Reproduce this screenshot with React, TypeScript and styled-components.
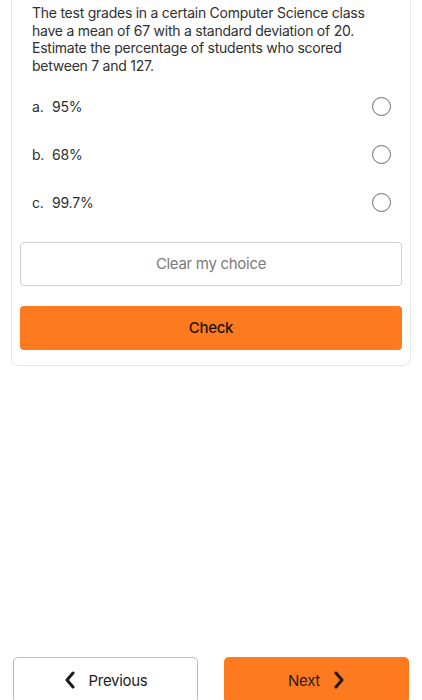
import React, {useState} from 'react';
import styled, {createGlobalStyle} from 'styled-components';

const GlobalStyle = createGlobalStyle`
  html, body {
    margin: 0;
    padding: 0;
    background: #ffffff;
  }
  body {
    font-family: Inter, "Noto Sans", "Liberation Sans", sans-serif;
    color: #2b2b2b;
    -webkit-font-smoothing: antialiased;
  }
`;

const options = [
  {letter: 'a.', label: '95%'},
  {letter: 'b.', label: '68%'},
  {letter: 'c.', label: '99.7%'},
];

const Chevron = ({dir}: {dir: 'left' | 'right'}) => (
  <svg width="12" height="18" viewBox="0 0 12 18" fill="none">
    <polyline
      points={dir === 'left' ? '9,2 3,9 9,16' : '3,2 9,9 3,16'}
      stroke="#1c1c1c"
      strokeWidth="3"
      strokeLinecap="round"
      strokeLinejoin="round"
    />
  </svg>
);

export default function App() {
  const [choice, setChoice] = useState<number | null>(null);

  return (
    <Styled.Page>
      <GlobalStyle />
      <Styled.Card>
        <Styled.Question>
          The test grades in a certain Computer Science class have a mean of 67
          with a standard deviation of 20. Estimate the percentage of students
          who scored between 7 and 127.
        </Styled.Question>
        <Styled.Options>
          {options.map((o, i) => (
            <Styled.Option key={o.letter} onClick={() => setChoice(i)}>
              <Styled.Letter>{o.letter}</Styled.Letter>
              <Styled.Label>{o.label}</Styled.Label>
              <Styled.Radio $checked={choice === i} />
            </Styled.Option>
          ))}
        </Styled.Options>
        <Styled.ClearButton onClick={() => setChoice(null)}>
          Clear my choice
        </Styled.ClearButton>
        <Styled.CheckButton>Check</Styled.CheckButton>
      </Styled.Card>
      <div />
      <Styled.Footer>
        <Styled.NavButton>
          <Chevron dir="left" />
          Previous
        </Styled.NavButton>
        <Styled.NavButton $primary>
          Next
          <Chevron dir="right" />
        </Styled.NavButton>
      </Styled.Footer>
    </Styled.Page>
  );
}

const Styled = {
  Page: styled.div`
    height: 700px;
    overflow: hidden;
    display: grid;
    grid-template-rows: auto 1fr auto;
  `,
  Card: styled.div`
    margin: 0 11px;
    padding: 4px 8px 15px;
    border: 1px solid #e8e8e8;
    border-top: none;
    border-radius: 0 0 7px 7px;
    display: flex;
    flex-direction: column;
  `,
  Question: styled.p`
    margin: 0;
    padding: 0 12px;
    font-size: 14px;
    letter-spacing: -0.25px;
    line-height: 17.7px;
    color: #303030;
  `,
  Options: styled.div`
    display: flex;
    flex-direction: column;
    margin-top: 8px;
  `,
  Option: styled.div`
    display: flex;
    align-items: center;
    height: 48px;
    padding: 0 12px;
    font-size: 14px;
    letter-spacing: -0.2px;
    color: #303030;
    cursor: pointer;
  `,
  Letter: styled.span`
    width: 20px;
  `,
  Label: styled.span`
    flex: 1;
  `,
  Radio: styled.span<{$checked: boolean}>`
    width: 19px;
    height: 19px;
    margin-right: -1px;
    border: 1.5px solid #6b6b6b;
    border-radius: 50%;
    box-sizing: border-box;
    background: ${p => (p.$checked ? 'radial-gradient(#333 40%, transparent 45%)' : 'transparent')};
  `,
  ClearButton: styled.button`
    margin-top: 15px;
    height: 44px;
    border: 1px solid #cfcfcf;
    border-radius: 4px;
    background: #ffffff;
    color: #7a7a7a;
    font-family: inherit;
    font-size: 15px;
    letter-spacing: -0.3px;
  `,
  CheckButton: styled.button`
    margin-top: 20px;
    height: 44px;
    border: none;
    border-radius: 4px;
    background: #fd7a1e;
    color: #1e1208;
    font-family: inherit;
    font-size: 15px;
    letter-spacing: -0.3px;
    font-weight: 500;
  `,
  Footer: styled.div`
    display: grid;
    grid-template-columns: 1fr 1fr;
    gap: 26px;
    padding: 0 13px 0;
    height: 43px;
  `,
  NavButton: styled.button<{$primary?: boolean}>`
    height: 46px;
    display: flex;
    align-items: center;
    justify-content: center;
    gap: 13px;
    border: ${p => (p.$primary ? 'none' : '1px solid #bdbdbd')};
    border-radius: 5px;
    background: ${p => (p.$primary ? '#fd7a1e' : '#ffffff')};
    color: #1e1e1e;
    font-family: inherit;
    font-size: 15px;
    letter-spacing: -0.3px;
  `,
};
